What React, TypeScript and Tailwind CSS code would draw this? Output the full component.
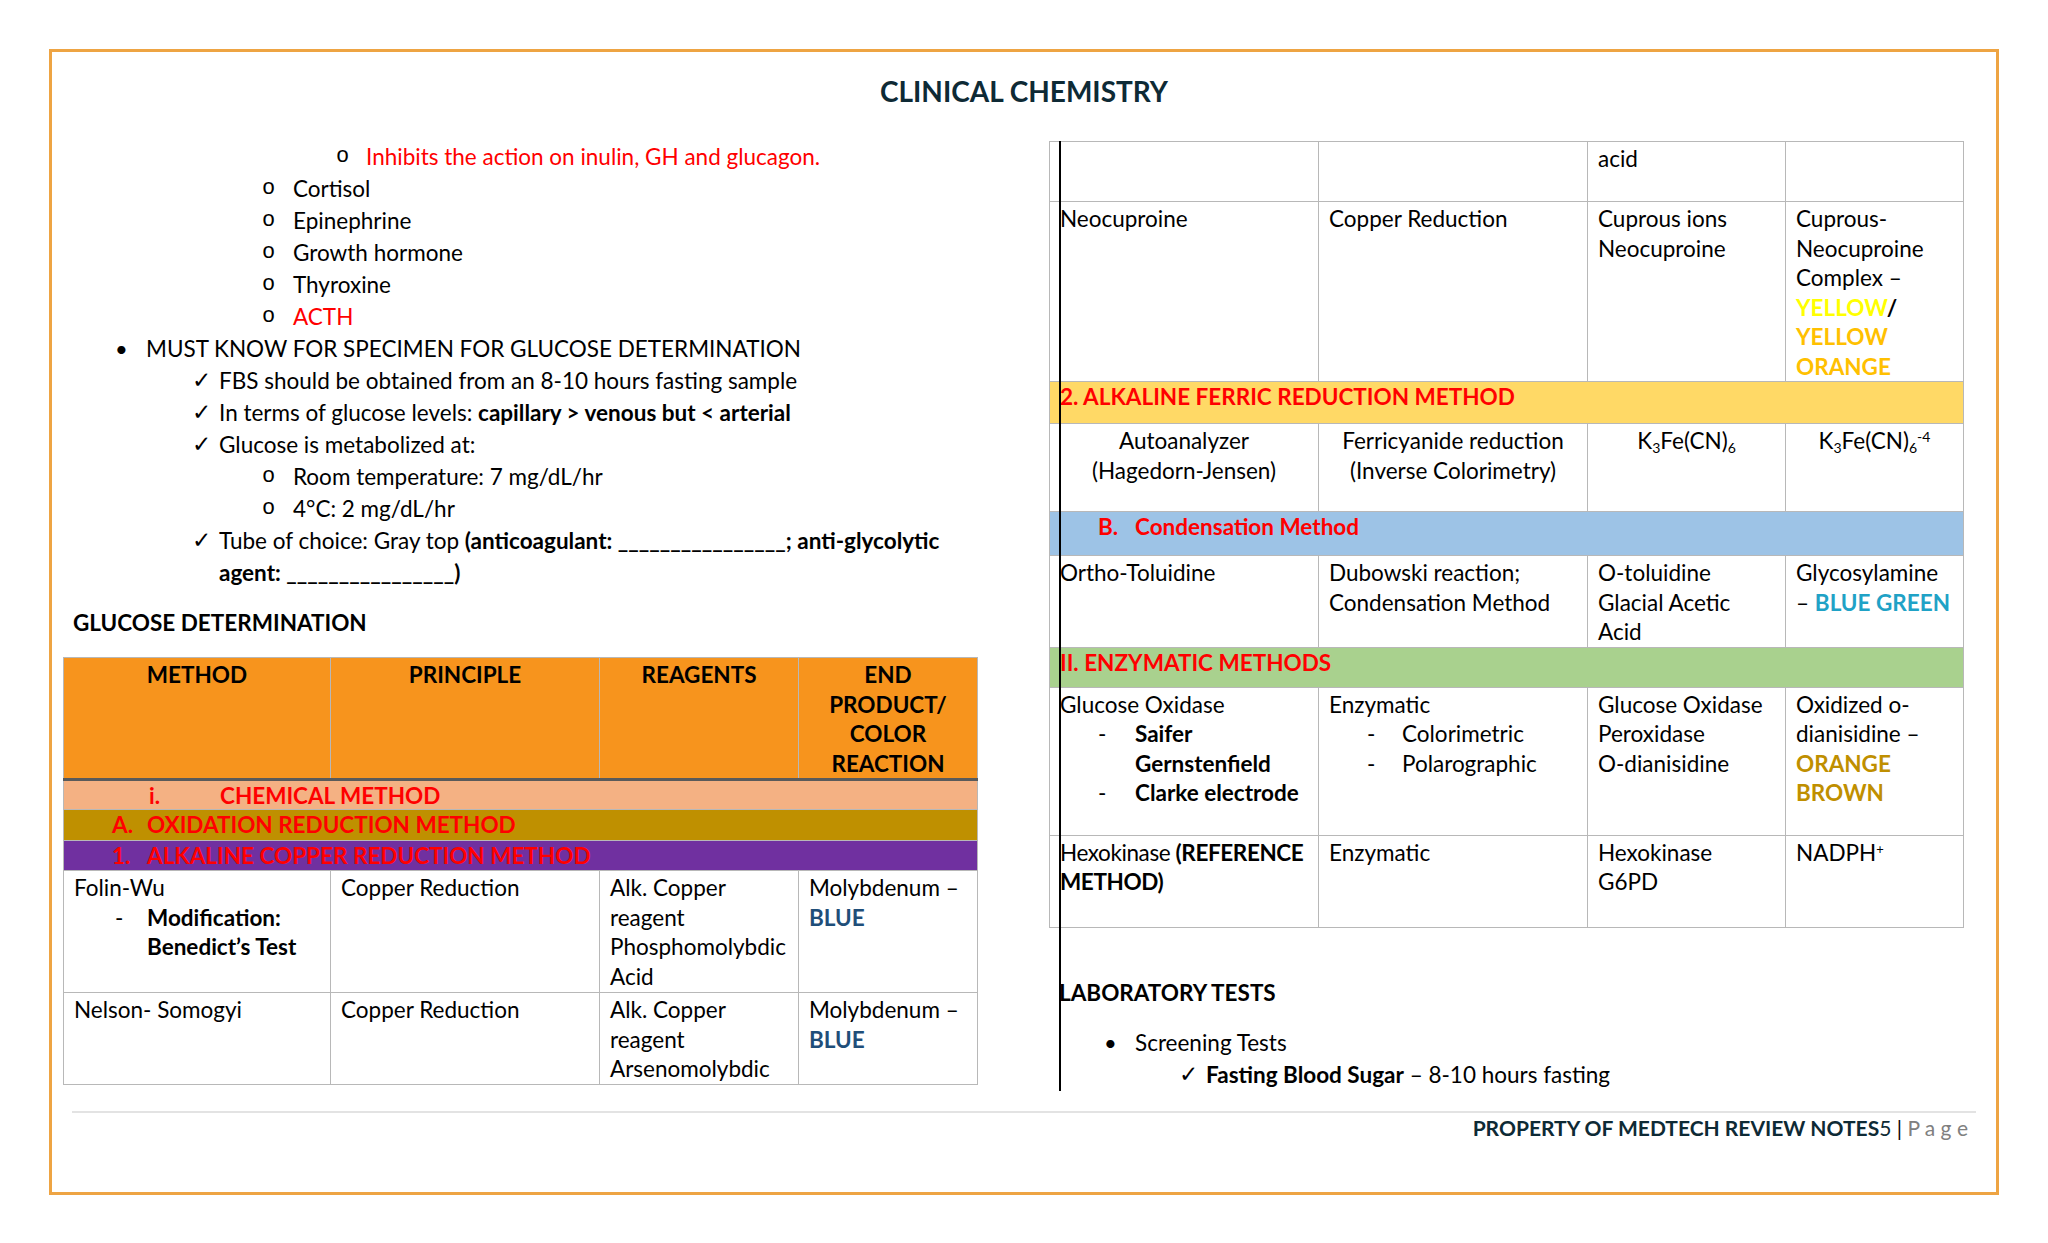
import React from "react";

const RED = "text-[#ff0000]";

function Check() {
  return <span className="w-[27px] shrink-0 font-['DejaVu_Sans',sans-serif] text-[23px] leading-[30px]">✓</span>;
}

function Circ() {
  return <span className="w-[31px] shrink-0 font-['Liberation_Mono',monospace] text-[22px]">o</span>;
}

function Dot() {
  return <span className="w-[31px] shrink-0 text-[22px]">•</span>;
}

function Band({ color, children }: { color: string; children: React.ReactNode }) {
  return (
    <tr className={color}>
      <td colSpan={4} className="border border-[#b8b8b8] px-[10px] pt-[2px] align-top font-bold leading-[26px] text-[#ff0000]">
        {children}
      </td>
    </tr>
  );
}

const td = "border border-[#b8b8b8] px-[10px] pt-[2px] align-top";

function LeftColumn() {
  return (
    <div className="w-[914px] shrink-0">
      <div className="leading-[32px]">
        <div className={`flex pl-[273px] ${RED}`}>
          <span className="w-[30px] shrink-0 font-['Liberation_Mono',monospace] text-[22px] text-black">o</span>
          <span>Inhibits the action on inulin, GH and glucagon.</span>
        </div>
        {["Cortisol", "Epinephrine", "Growth hormone", "Thyroxine"].map((t) => (
          <div key={t} className="flex pl-[199px]">
            <Circ />
            <span>{t}</span>
          </div>
        ))}
        <div className="flex pl-[199px]">
          <Circ />
          <span className={RED}>ACTH</span>
        </div>
        <div className="flex pl-[52px]">
          <Dot />
          <span>MUST KNOW FOR SPECIMEN FOR GLUCOSE DETERMINATION</span>
        </div>
        <div className="flex pl-[129px]">
          <Check />
          <span>FBS should be obtained from an 8-10 hours fasting sample</span>
        </div>
        <div className="flex pl-[129px]">
          <Check />
          <span>
            In terms of glucose levels: <b>capillary &gt; venous but &lt; arterial</b>
          </span>
        </div>
        <div className="flex pl-[129px]">
          <Check />
          <span>Glucose is metabolized at:</span>
        </div>
        <div className="flex pl-[199px]">
          <Circ />
          <span>Room temperature: 7 mg/dL/hr</span>
        </div>
        <div className="flex pl-[199px]">
          <Circ />
          <span>4°C: 2 mg/dL/hr</span>
        </div>
        <div className="flex pl-[129px]">
          <Check />
          <span>
            Tube of choice: Gray top <b>(anticoagulant: ________________; anti-glycolytic</b>
            <br />
            <b>agent: ________________)</b>
          </span>
        </div>
        <div className="mt-[18px] pl-[10px] font-bold">GLUCOSE DETERMINATION</div>
      </div>

      <table className="mt-[18px] w-[914px] table-fixed border-collapse leading-[29.5px]">
        <colgroup>
          <col className="w-[267px]" />
          <col className="w-[269px]" />
          <col className="w-[199px]" />
          <col className="w-[179px]" />
        </colgroup>
        <tbody>
          <tr className="h-[121px] bg-[#f7941d] text-center font-bold">
            <td className={`${td} border-b-[3px] border-b-[#5a5a5a]`}>METHOD</td>
            <td className={`${td} border-b-[3px] border-b-[#5a5a5a]`}>PRINCIPLE</td>
            <td className={`${td} border-b-[3px] border-b-[#5a5a5a]`}>REAGENTS</td>
            <td className={`${td} border-b-[3px] border-b-[#5a5a5a]`}>
              END
              <br />
              PRODUCT/
              <br />
              COLOR
              <br />
              REACTION
            </td>
          </tr>
          <Band color="bg-[#f4b183] h-[30px]">
            <span className="box-content inline-block w-[71px] pl-[75px]">i.</span>
            CHEMICAL METHOD
          </Band>
          <Band color="bg-[#bf9000] h-[31px]">
            <span className="box-content inline-block w-[35px] pl-[38px]">A.</span>
            OXIDATION REDUCTION METHOD
          </Band>
          <Band color="bg-[#7030a0] h-[30px]">
            <span className="box-content inline-block w-[35px] pl-[38px]">1.</span>
            ALKALINE COPPER REDUCTION METHOD
          </Band>
          <tr className="h-[122px]">
            <td className={td}>
              Folin-Wu
              <div className="flex pl-[41px]">
                <span className="w-[32px] shrink-0">-</span>
                <b>
                  Modification:
                  <br />
                  Benedict’s Test
                </b>
              </div>
            </td>
            <td className={td}>Copper Reduction</td>
            <td className={td}>
              Alk. Copper
              <br />
              reagent
              <br />
              Phosphomolybdic
              <br />
              Acid
            </td>
            <td className={td}>
              Molybdenum –
              <br />
              <b className="text-[#1f4e79]">BLUE</b>
            </td>
          </tr>
          <tr className="h-[90px]">
            <td className={td}>Nelson- Somogyi</td>
            <td className={td}>Copper Reduction</td>
            <td className={td}>
              Alk. Copper
              <br />
              reagent
              <br />
              Arsenomolybdic
            </td>
            <td className={td}>
              Molybdenum –
              <br />
              <b className="text-[#1f4e79]">BLUE</b>
            </td>
          </tr>
        </tbody>
      </table>
    </div>
  );
}

function RightColumn() {
  return (
    <div className="relative ml-[72px] w-[914px] shrink-0">
      <table className="w-[914px] table-fixed border-collapse leading-[29.5px]">
        <colgroup>
          <col className="w-[269px]" />
          <col className="w-[269px]" />
          <col className="w-[198px]" />
          <col className="w-[178px]" />
        </colgroup>
        <tbody>
          <tr className="h-[60px]">
            <td className={td}></td>
            <td className={td}></td>
            <td className={td}>acid</td>
            <td className={td}></td>
          </tr>
          <tr className="h-[180px]">
            <td className={td}>Neocuproine</td>
            <td className={td}>Copper Reduction</td>
            <td className={td}>
              Cuprous ions
              <br />
              Neocuproine
            </td>
            <td className={td}>
              Cuprous-
              <br />
              Neocuproine
              <br />
              Complex –
              <br />
              <b className="text-[#ffff00]">YELLOW</b>
              <b>/</b>
              <br />
              <b className="text-[#ffc000]">
                YELLOW
                <br />
                ORANGE
              </b>
            </td>
          </tr>
          <Band color="bg-[#ffd966] h-[42px]">2. ALKALINE FERRIC REDUCTION METHOD</Band>
          <tr className="h-[88px] text-center">
            <td className={td}>
              Autoanalyzer
              <br />
              (Hagedorn-Jensen)
            </td>
            <td className={td}>
              Ferricyanide reduction
              <br />
              (Inverse Colorimetry)
            </td>
            <td className={td}>
              K<sub className="text-[14px]">3</sub>Fe(CN)<sub className="text-[14px]">6</sub>
            </td>
            <td className={td}>
              K<sub className="text-[14px]">3</sub>Fe(CN)<sub className="text-[14px]">6</sub>
              <sup className="text-[14px]">-4</sup>
            </td>
          </tr>
          <Band color="bg-[#9dc3e6] h-[44px]">
            <span className="box-content inline-block w-[37px] pl-[38px]">B.</span>
            Condensation Method
          </Band>
          <tr className="h-[90px]">
            <td className={td}>Ortho-Toluidine</td>
            <td className={td}>
              Dubowski reaction;
              <br />
              Condensation Method
            </td>
            <td className={td}>
              O-toluidine
              <br />
              Glacial Acetic
              <br />
              Acid
            </td>
            <td className={td}>
              Glycosylamine
              <br />– <b className="text-[#1fa2c6]">BLUE GREEN</b>
            </td>
          </tr>
          <Band color="bg-[#a9d18e] h-[40px]">II. ENZYMATIC METHODS</Band>
          <tr className="h-[148px]">
            <td className={td}>
              Glucose Oxidase
              <div className="flex pl-[38px]">
                <span className="w-[37px] shrink-0">-</span>
                <b>
                  Saifer
                  <br />
                  Gernstenfield
                </b>
              </div>
              <div className="flex pl-[38px]">
                <span className="w-[37px] shrink-0">-</span>
                <b>Clarke electrode</b>
              </div>
            </td>
            <td className={td}>
              Enzymatic
              <div className="flex pl-[38px]">
                <span className="w-[35px] shrink-0">-</span>
                <span>Colorimetric</span>
              </div>
              <div className="flex pl-[38px]">
                <span className="w-[35px] shrink-0">-</span>
                <span>Polarographic</span>
              </div>
            </td>
            <td className={td}>
              Glucose Oxidase
              <br />
              Peroxidase
              <br />
              O-dianisidine
            </td>
            <td className={td}>
              Oxidized o-
              <br />
              dianisidine –
              <br />
              <b className="text-[#bf8f00]">
                ORANGE
                <br />
                BROWN
              </b>
            </td>
          </tr>
          <tr className="h-[92px]">
            <td className={`${td} whitespace-nowrap tracking-[-0.4px]`}>
              Hexokinase <b>(REFERENCE</b>
              <br />
              <b>METHOD)</b>
            </td>
            <td className={td}>Enzymatic</td>
            <td className={td}>
              Hexokinase
              <br />
              G6PD
            </td>
            <td className={td}>
              NADPH<sup className="text-[13px]">+</sup>
            </td>
          </tr>
        </tbody>
      </table>

      <div className="pl-[10px] leading-[32px]">
        <div className="mt-[49px] font-bold">LABORATORY TESTS</div>
        <div className="mt-[18px] flex pl-[45px]">
          <Dot />
          <span>Screening Tests</span>
        </div>
        <div className="flex pl-[120px]">
          <Check />
          <span>
            <b>Fasting Blood Sugar</b> – 8-10 hours fasting
          </span>
        </div>
      </div>

      <div className="absolute bottom-0 left-[10px] top-0 w-[2px] bg-black" />
    </div>
  );
}

export default function App() {
  return (
    <div className="min-h-screen bg-white pl-[49px] pt-[49px] font-[Lato,sans-serif] text-[22.5px] text-black">
      <div className="flex h-[1146px] w-[1950px] flex-col border-[3px] border-[#eea443]">
        <h1 className="mt-[19px] text-center text-[28px] font-bold leading-[40px] text-[#0e2a35]">
          CLINICAL CHEMISTRY
        </h1>
        <div className="mt-[30px] flex pl-[11px]">
          <LeftColumn />
          <RightColumn />
        </div>
        <div className="mx-[20px] mt-[20px] border-t-[2px] border-[#e3e3e3]" />
        <div className="mr-[28px] text-right text-[21px] leading-[30px]">
          <b className="text-[#0e2a35]">PROPERTY OF MEDTECH REVIEW NOTES</b>
          <span className="text-[#0e2a35]">5</span> | <span className="text-[#808080]">P a g e</span>
        </div>
      </div>
    </div>
  );
}
